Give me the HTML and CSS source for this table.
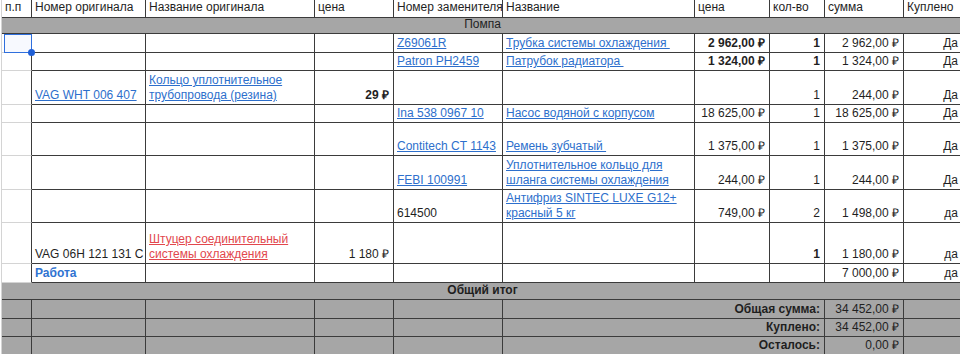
FILE: index.html
```html
<!DOCTYPE html>
<html lang="ru">
<head>
<meta charset="utf-8">
<title>Помпа</title>
<link rel="stylesheet" href="styles.css">
</head>
<body>
<div class="sheet">
  <div class="c hd">п.п</div>
  <div class="c hd">Номер оригинала</div>
  <div class="c hd">Название оригинала</div>
  <div class="c hd">цена</div>
  <div class="c hd">Номер заменителя</div>
  <div class="c hd">Название</div>
  <div class="c hd">цена</div>
  <div class="c hd">кол-во</div>
  <div class="c hd">сумма</div>
  <div class="c hd">Куплено</div>

  <div class="c band">Помпа</div>

  <div class="c pp sel"><span class="selbox"></span></div>
  <div class="c"></div>
  <div class="c"></div>
  <div class="c"></div>
  <div class="c"><span class="lnk">Z69061R</span></div>
  <div class="c"><span class="lnk">Трубка системы охлаждения&nbsp;</span></div>
  <div class="c r b">2 962,00 ₽</div>
  <div class="c r b">1</div>
  <div class="c r">2 962,00 ₽</div>
  <div class="c r">Да</div>

  <div class="c pp"></div>
  <div class="c"></div>
  <div class="c"></div>
  <div class="c"></div>
  <div class="c"><span class="lnk">Patron PH2459</span></div>
  <div class="c"><span class="lnk">Патрубок радиатора&nbsp;</span></div>
  <div class="c r b">1 324,00 ₽</div>
  <div class="c r b">1</div>
  <div class="c r">1 324,00 ₽</div>
  <div class="c r">Да</div>

  <div class="c pp"></div>
  <div class="c"><span class="lnk">VAG WHT 006 407</span></div>
  <div class="c"><span class="lnk">Кольцо уплотнительное<br>трубопровода (резина)</span></div>
  <div class="c r b">29 ₽</div>
  <div class="c"></div>
  <div class="c"></div>
  <div class="c"></div>
  <div class="c r">1</div>
  <div class="c r">244,00 ₽</div>
  <div class="c r">Да</div>

  <div class="c pp"></div>
  <div class="c"></div>
  <div class="c"></div>
  <div class="c"></div>
  <div class="c"><span class="lnk">Ina 538 0967 10</span></div>
  <div class="c"><span class="lnk">Насос водяной с корпусом</span></div>
  <div class="c r">18 625,00 ₽</div>
  <div class="c r">1</div>
  <div class="c r">18 625,00 ₽</div>
  <div class="c r">Да</div>

  <div class="c pp"></div>
  <div class="c"></div>
  <div class="c"></div>
  <div class="c"></div>
  <div class="c"><span class="lnk">Contitech CT 1143</span></div>
  <div class="c"><span class="lnk">Ремень зубчатый&nbsp;</span></div>
  <div class="c r">1 375,00 ₽</div>
  <div class="c r">1</div>
  <div class="c r">1 375,00 ₽</div>
  <div class="c r">Да</div>

  <div class="c pp"></div>
  <div class="c"></div>
  <div class="c"></div>
  <div class="c"></div>
  <div class="c"><span class="lnk">FEBI 100991</span></div>
  <div class="c"><span class="lnk">Уплотнительное кольцо для<br>шланга системы охлаждения</span></div>
  <div class="c r">244,00 ₽</div>
  <div class="c r">1</div>
  <div class="c r">244,00 ₽</div>
  <div class="c r">Да</div>

  <div class="c pp"></div>
  <div class="c"></div>
  <div class="c"></div>
  <div class="c"></div>
  <div class="c">614500</div>
  <div class="c"><span class="lnk">Антифриз SINTEC LUXE G12+<br>красный 5 кг</span></div>
  <div class="c r">749,00 ₽</div>
  <div class="c r">2</div>
  <div class="c r">1 498,00 ₽</div>
  <div class="c r">да</div>

  <div class="c pp"></div>
  <div class="c">VAG 06H 121 131 C</div>
  <div class="c"><span class="lnk red">Штуцер соединительный<br>системы охлаждения</span></div>
  <div class="c r">1 180 ₽</div>
  <div class="c"></div>
  <div class="c"></div>
  <div class="c"></div>
  <div class="c r b">1</div>
  <div class="c r">1 180,00 ₽</div>
  <div class="c r">да</div>

  <div class="c pp"></div>
  <div class="c work">Работа</div>
  <div class="c"></div>
  <div class="c"></div>
  <div class="c"></div>
  <div class="c"></div>
  <div class="c"></div>
  <div class="c"></div>
  <div class="c r">7 000,00 ₽</div>
  <div class="c r">да</div>

  <div class="c band b">Общий итог</div>

  <div class="c g"></div>
  <div class="c g"></div>
  <div class="c g"></div>
  <div class="c g"></div>
  <div class="c g"></div>
  <div class="c g r b wide">Общая сумма:</div>
  <div class="c g r">34 452,00 ₽</div>
  <div class="c g"></div>

  <div class="c g"></div>
  <div class="c g"></div>
  <div class="c g"></div>
  <div class="c g"></div>
  <div class="c g"></div>
  <div class="c g r b wide">Куплено:</div>
  <div class="c g r">34 452,00 ₽</div>
  <div class="c g"></div>

  <div class="c g"></div>
  <div class="c g"></div>
  <div class="c g"></div>
  <div class="c g"></div>
  <div class="c g"></div>
  <div class="c g r b wide">Осталось:</div>
  <div class="c g r">0,00 ₽</div>
  <div class="c g"></div>
</div>
</body>
</html>
```

FILE: styles.css
```css
html, body {
  margin: 0;
  padding: 0;
  background: #ffffff;
}

body {
  width: 960px;
  height: 354px;
  overflow: hidden;
  font-family: "Liberation Sans", Arial, sans-serif;
  font-size: 12px;
  color: #1f1f1f;
}

.sheet {
  display: grid;
  grid-template-columns: 30px 114px 169px 79px 109px 192px 75px 55px 79px 59px;
  grid-template-rows: 18px 16px 19px 18px 34px 18px 33px 34px 33px 41px 19px 17px 19px 18px 18px;
  width: max-content;
  margin-left: 1px;
  border-left: 1px solid #d4d4d4;
}

.c {
  box-sizing: border-box;
  min-width: 0;
  display: flex;
  align-items: flex-end;
  padding: 0 3px 1px 3px;
  border-right: 1px solid #3b3b3b;
  border-bottom: 1px solid #3b3b3b;
  line-height: 15px;
  white-space: nowrap;
  overflow: hidden;
}

.hd {
  padding-bottom: 2px;
}

.pp {
  border-bottom-color: #d4d4d4;
}

.r {
  justify-content: flex-end;
  text-align: right;
  padding-right: 4px;
}

.b {
  font-weight: bold;
}

.lnk {
  color: #2d6fcc;
  text-decoration: underline;
}

.red {
  color: #e2474d;
}

.work {
  color: #2f73d1;
  font-weight: bold;
}

.band {
  grid-column: 1 / -1;
  background: #a6a6a6;
  justify-content: center;
  padding-left: 4px;
}

.g {
  background: #a6a6a6;
}

.wide {
  grid-column: span 3;
}

.sel {
  position: relative;
  overflow: visible;
}

.selbox {
  position: absolute;
  left: 2px;
  top: 0;
  right: -1px;
  bottom: -1px;
  border: 1px solid #2f6fdd;
  background: rgba(47, 111, 221, 0.04);
}

.selbox::after {
  content: "";
  position: absolute;
  right: -4px;
  bottom: -4px;
  width: 7px;
  height: 7px;
  border-radius: 50%;
  background: #1f5fd6;
}
```
